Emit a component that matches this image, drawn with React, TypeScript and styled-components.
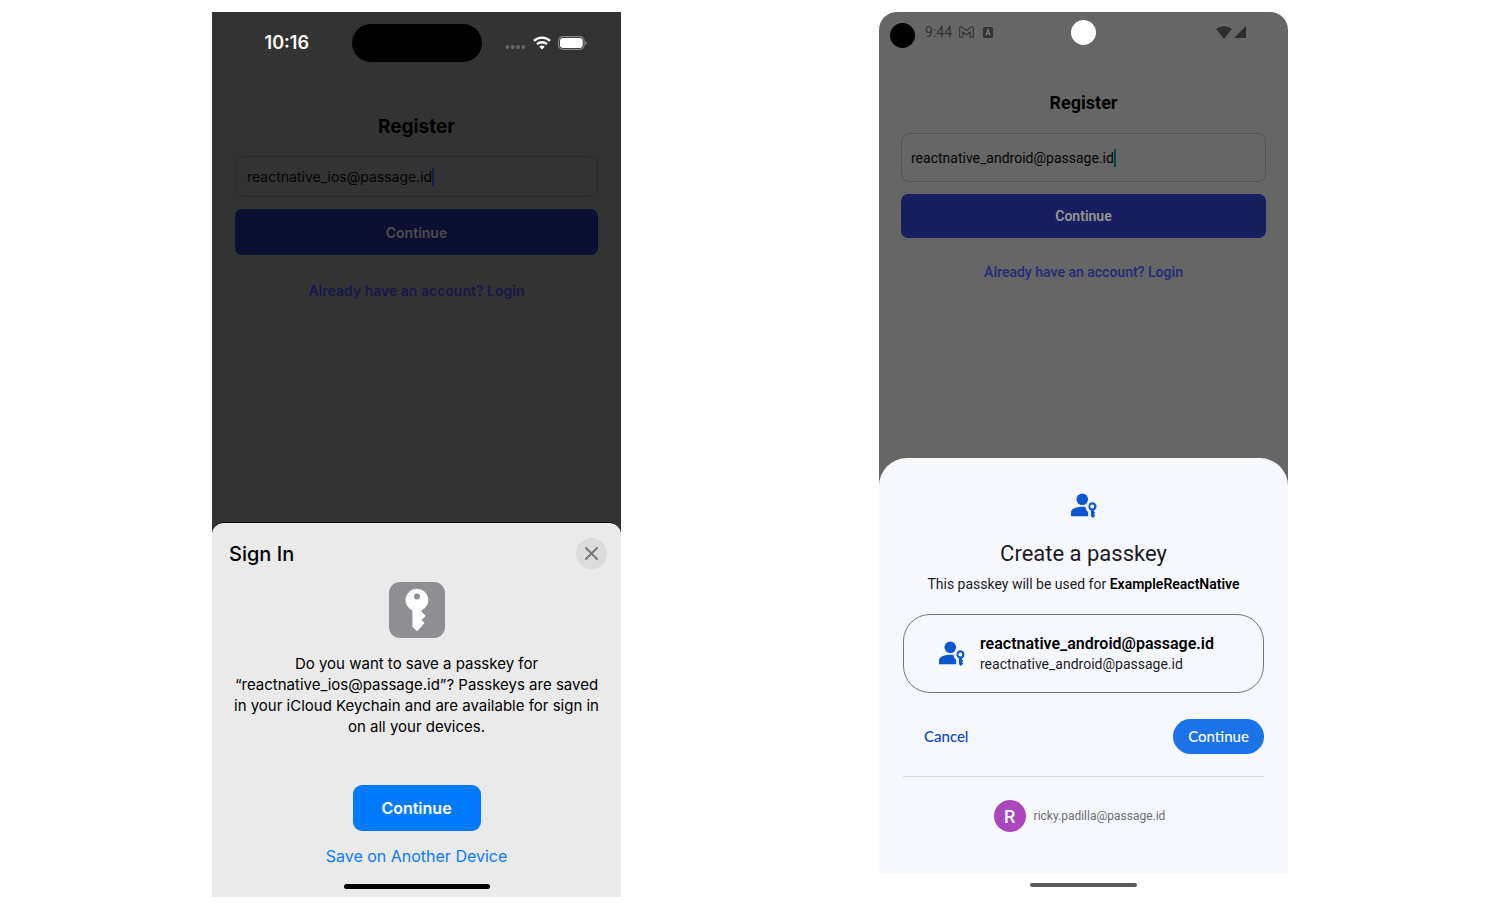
import React from "react";
import styled, { createGlobalStyle, css } from "styled-components";

const ios = `Inter, "Liberation Sans", sans-serif`;
const android = `Roboto, "Liberation Sans", sans-serif`;

const GlobalStyle = createGlobalStyle`
  *, *::before, *::after { box-sizing: border-box; }
  body { margin: 0; background: #fff; }
  h1, h2, p { margin: 0; }
  button, input { font: inherit; color: inherit; border: 0; padding: 0; background: none; }
  button { cursor: pointer; }
  a { text-decoration: none; }
  svg { display: block; flex: none; }
`;

const Page = styled.main`
  display: flex;
  flex-wrap: wrap;
  justify-content: space-between;
  gap: 24px;
  max-width: 1076px;
  margin: 0 auto;
  padding: 12px 0;
`;

const Phone = styled.section<{ $platform: "ios" | "android" }>`
  display: flex;
  flex-direction: column;
  flex: 0 1 409px;
  overflow: hidden;
  ${(p) =>
    p.$platform === "ios"
      ? css`
          font-family: ${ios};
          background: #333;
        `
      : css`
          font-family: ${android};
          border-radius: 18px 18px 0 0;
          background: #fff;
        `}
`;

const Backdrop = styled.div`
  display: flex;
  flex-direction: column;
  flex: 1;
  background: #666;
`;

/* iOS status bar */

const IosStatus = styled.header`
  display: grid;
  grid-template-columns: 1fr 130px 1fr;
  align-items: center;
  padding-top: 12px;
  color: #fff;
`;

const IosTime = styled.time`
  padding-left: 10px;
  text-align: center;
  font-size: 18px;
  line-height: 20px;
  font-weight: 600;
`;

const Island = styled.div`
  height: 38px;
  border-radius: 19px;
  background: #000;
`;

const IosIndicators = styled.div`
  display: flex;
  justify-content: flex-end;
  align-items: center;
  gap: 7px;
  padding-right: 34px;
`;

/* Android status bar */

const AndroidStatus = styled.header`
  display: grid;
  grid-template-columns: 1fr 25px 1fr;
  align-items: start;
  height: 43px;
  padding: 8px 11px 0;
  color: #333;
`;

const Camera = styled.div`
  width: 25px;
  height: 25px;
  border-radius: 50%;
  background: #fff;
`;

const RecordingDot = styled(Camera)`
  margin-top: 7px;
  background: #000;
`;

const StatusGroup = styled.div<{ $end?: boolean }>`
  display: flex;
  align-items: center;
  height: 24px;
  gap: ${(p) => (p.$end ? 2 : 7)}px;
  justify-content: ${(p) => (p.$end ? "flex-end" : "flex-start")};
  padding-right: ${(p) => (p.$end ? 31 : 0)}px;
`;

const AndroidTime = styled.time`
  padding-left: 3px;
  font-size: 14px;
  line-height: 16px;
`;

/* Register form */

const Form = styled.form<{ $platform: "ios" | "android" }>`
  display: flex;
  flex-direction: column;
  align-items: center;
  padding: ${(p) => (p.$platform === "ios" ? "53px 23px 221px" : "36px 22px 176px")};
`;

const FormTitle = styled.h1<{ $size: number }>`
  font-size: ${(p) => p.$size}px;
  line-height: 24px;
  font-weight: 700;
  color: #000;
`;

const Field = styled.label<{ $platform: "ios" | "android" }>`
  display: flex;
  align-items: center;
  width: 100%;
  border: 1px solid;
  border-radius: 8px;
  font-size: 14px;
  ${(p) =>
    p.$platform === "ios"
      ? css`
          height: 41px;
          margin-top: 17px;
          padding: 0 11px;
          border-color: #2b2b2d;
        `
      : css`
          height: 49px;
          margin-top: 18px;
          padding: 0 9px;
          border-color: #555557;
        `}
`;

const FieldInput = styled.input`
  field-sizing: content;
  min-width: 20px;
  outline: 0;
  color: #050505;
`;

const Caret = styled.span<{ $color: string }>`
  width: 2px;
  height: 18px;
  background: ${(p) => p.$color};
`;

const SubmitButton = styled.button<{ $platform: "ios" | "android" }>`
  width: 100%;
  margin-top: 12px;
  border-radius: 7px;
  font-size: 14px;
  font-weight: 600;
  ${(p) =>
    p.$platform === "ios"
      ? css`
          height: 46px;
          background: #0b0f30;
          color: #4c4c4c;
        `
      : css`
          height: 44px;
          background: #181f61;
          color: #969696;
        `}
`;

const LoginLink = styled.a<{ $platform: "ios" | "android" }>`
  font-size: 14px;
  font-weight: 600;
  line-height: 20px;
  ${(p) =>
    p.$platform === "ios"
      ? css`
          margin-top: 26px;
          color: #17194b;
        `
      : css`
          margin-top: 24px;
          color: #272e76;
        `}
`;

/* iOS sheet */

const IosSheet = styled.div`
  display: flex;
  flex-direction: column;
  align-items: center;
  flex: 1;
  padding: 15px 14px 7px;
  border-top: 1px solid #000;
  border-radius: 12px 12px 0 0;
  background: #eaeaea;
  color: #000;
`;

const SheetHeader = styled.div`
  display: flex;
  justify-content: space-between;
  align-items: center;
  width: 100%;
  padding-left: 3px;
`;

const SheetTitle = styled.h2`
  font-size: 20px;
  line-height: 24px;
  font-weight: 500;
`;

const CloseButton = styled.button`
  display: grid;
  place-items: center;
  width: 31px;
  height: 31px;
  border-radius: 50%;
  background: #dcdcdd;
`;

const KeyTile = styled.div`
  display: grid;
  place-items: center;
  width: 56px;
  height: 56px;
  margin-top: 13px;
  border-radius: 11px;
  background: #8e8e93;
`;

const Message = styled.p`
  max-width: 376px;
  margin-top: 15px;
  font-size: 15px;
  line-height: 21px;
  text-align: center;
`;

const PrimaryButton = styled.button`
  width: 128px;
  height: 46px;
  margin-top: 48px;
  border-radius: 9px;
  background: #007aff;
  color: #fff;
  font-size: 16px;
  font-weight: 600;
`;

const TextButton = styled.button`
  margin-top: 15px;
  color: #0a7aff;
  font-size: 16px;
  line-height: 20px;
`;

const HomeBar = styled.div<{ $width: number; $color: string; $top: number }>`
  width: ${(p) => p.$width}px;
  height: ${(p) => (p.$color === "#000" ? 5 : 4)}px;
  margin: ${(p) => p.$top}px auto 0;
  border-radius: 3px;
  background: ${(p) => p.$color};
`;

/* Android sheet */

const AndroidSheet = styled.div`
  display: flex;
  flex-direction: column;
  align-items: center;
  padding: 35px 24px 41px;
  border-radius: 28px 28px 0 0;
  background: #f8f9fe;
  color: #1b1b1f;
`;

const PasskeyTitle = styled.h2`
  margin-top: 21px;
  font-size: 22px;
  line-height: 28px;
  font-weight: 400;
`;

const PasskeyNote = styled.p`
  margin-top: 6px;
  font-size: 14px;
  line-height: 20px;

  strong {
    font-weight: 600;
    color: #000;
  }
`;

const Account = styled.div`
  display: flex;
  align-items: center;
  gap: 15px;
  width: 100%;
  height: 79px;
  margin-top: 20px;
  padding: 0 35px;
  border: 1px solid #76777a;
  border-radius: 27px;
`;

const AccountText = styled.div`
  display: flex;
  flex-direction: column;
  font-size: 14px;
  line-height: 20px;

  strong {
    font-size: 16px;
    font-weight: 600;
    color: #000;
  }
`;

const Actions = styled.div`
  display: flex;
  justify-content: space-between;
  align-items: center;
  width: 100%;
  margin-top: 26px;
  padding-bottom: 22px;
  border-bottom: 1px solid #dadce0;
  font-family: Lato, Roboto, sans-serif;
  font-size: 15px;
  font-weight: 500;
`;

const CancelButton = styled.button`
  height: 35px;
  padding: 0 21px 2px;
  color: #0b46d0;
`;

const ContinueButton = styled.button`
  width: 91px;
  height: 35px;
  padding-bottom: 2px;
  border-radius: 18px;
  background: #1a73e8;
  color: #fff;
`;

const Owner = styled.div`
  display: flex;
  align-items: center;
  gap: 8px;
  margin-top: 23px;
  padding-right: 8px;
  color: #6b6d72;
  font-size: 12px;
`;

const Avatar = styled.span`
  display: grid;
  place-items: center;
  width: 32px;
  height: 32px;
  border-radius: 50%;
  background: #ab47bc;
  color: #fff;
  font-size: 18px;
  font-weight: 500;
`;

const NavArea = styled.div`
  padding: 10px 0;
`;

const PasskeyIcon = () => (
  <svg width="26" height="26" viewBox="0 0 26 26" fill="#0b57d0" aria-hidden="true">
    <circle cx="11.3" cy="6.3" r="5.8" />
    <path d="M0 23.200v-3.500c0-2 1-3.400 2.800-4.200 2.500-1.200 5.200-1.800 8-1.800 1.500 0 2.500.1 3.700.3.200 2.100 1.200 3.900 2.700 5v4.200z" />
    <path
      fillRule="evenodd"
      d="M21.300 9.200a4.300 4.300 0 0 1 1.700 8.200v1.200l1.200 1.200-1.200 1.300 1.200 1.400-2.200 2.400-2-1.700v-5.800a4.300 4.300 0 0 1 1.300-8.200zm0 2.300a2 2 0 1 0 0 4 2 2 0 0 0 0-4z"
    />
  </svg>
);

function IosPhone() {
  return (
    <Phone $platform="ios">
      <IosStatus>
        <IosTime>10:16</IosTime>
        <Island />
        <IosIndicators>
          <svg width="21" height="18" viewBox="0 0 21 18" fill="#666">
            {[2.5, 7.8, 13.1, 18.4].map((x) => (
              <circle key={x} cx={x} cy="13" r="2" />
            ))}
          </svg>
          <svg width="18" height="14" viewBox="0 0 18 14" fill="none" stroke="#fff" strokeWidth="2.4">
            <path d="M1 4.900a11.500 11.500 0 0 1 16 0" />
            <path d="M4 8.200a7.200 7.200 0 0 1 10 0" />
            <path d="M6.300 10.700a3.900 3.900 0 0 1 5.400 0L9 13.500z" fill="#fff" stroke="none" />
          </svg>
          <svg width="29" height="14" viewBox="0 0 29 14">
            <rect x="0.6" y="0.6" width="25.5" height="12.8" rx="4.3" fill="none" stroke="#858585" strokeWidth="1.2" />
            <rect x="2" y="2" width="22.7" height="10" rx="3" fill="#fff" />
            <path d="M27.300 4.700c1.900.8 1.900 3.800 0 4.600z" fill="#858585" />
          </svg>
        </IosIndicators>
      </IosStatus>
      <Form $platform="ios" onSubmit={(e) => e.preventDefault()}>
        <FormTitle $size={19}>Register</FormTitle>
        <Field $platform="ios">
          <FieldInput type="text" aria-label="Email" defaultValue="reactnative_ios@passage.id" />
          <Caret $color="#0c1d55" />
        </Field>
        <SubmitButton $platform="ios">Continue</SubmitButton>
        <LoginLink $platform="ios" href="#login">
          Already have an account? Login
        </LoginLink>
      </Form>
      <IosSheet>
        <SheetHeader>
          <SheetTitle>Sign In</SheetTitle>
          <CloseButton aria-label="Close">
            <svg width="13" height="13" viewBox="0 0 13 13" stroke="#77777b" strokeWidth="2" strokeLinecap="round">
              <path d="M1 1l11 11M12 1L1 12" />
            </svg>
          </CloseButton>
        </SheetHeader>
        <KeyTile>
          <svg width="24" height="44" viewBox="0 0 24 44" fill="#fff">
            <path
              fillRule="evenodd"
              d="M12 .8a11.300 11.300 0 0 1 4.400 21.700v1l3.700 3.700c.4.400.4.800 0 1.200L16.500 32l2.400 2.500c.4.400.4.900 0 1.300l-6.200 7c-.4.400-.9.400-1.300 0l-3.500-3.600c-.4-.4-.5-.8-.5-1.300V22.500A11.300 11.300 0 0 1 12 .8zm0 4.700a3 3 0 1 0 0 6 3 3 0 0 0 0-6z"
            />
          </svg>
        </KeyTile>
        <Message>
          Do you want to save a passkey for
          <br />
          “reactnative_ios@passage.id”? Passkeys are saved
          <br />
          in your iCloud Keychain and are available for sign in
          <br />
          on all your devices.
        </Message>
        <PrimaryButton>Continue</PrimaryButton>
        <TextButton>Save on Another Device</TextButton>
        <HomeBar $width={146} $color="#000" $top={18} />
      </IosSheet>
    </Phone>
  );
}

function AndroidPhone() {
  return (
    <Phone $platform="android">
      <Backdrop>
        <AndroidStatus>
          <StatusGroup>
            <RecordingDot />
            <AndroidTime>9:44</AndroidTime>
            <svg width="15" height="12" viewBox="0 0 15 12" fill="none" stroke="#333" strokeWidth="1.1">
              <path d="M.7 11.200V2.200C.7.800 2.200.3 3.200 1.100L7.500 4.500l4.300-3.400c1-.8 2.500-.3 2.500 1.100v9h-3.200V6L7.500 8.800 3.900 6v5.200z" />
            </svg>
            <svg width="16" height="11" viewBox="0 0 16 11">
              <rect x="2" width="10" height="11" rx="1.500" fill="#333" />
              <path d="M4.700 8.500L7 2.500l2.300 6M5.500 6.700h3" fill="none" stroke="#777" strokeWidth="1.2" />
            </svg>
          </StatusGroup>
          <Camera />
          <StatusGroup $end>
            <svg width="16" height="13" viewBox="0 0 16 13" fill="#2e2e2e">
              <path d="M8 12.800L.3 3.200C4.500-.6 11.500-.6 15.700 3.200z" />
            </svg>
            <svg width="12" height="12" viewBox="0 0 12 12" fill="#2e2e2e">
              <path d="M12 0v12H0z" />
            </svg>
          </StatusGroup>
        </AndroidStatus>
        <Form $platform="android" onSubmit={(e) => e.preventDefault()}>
          <FormTitle $size={18}>Register</FormTitle>
          <Field $platform="android">
            <FieldInput type="text" aria-label="Email" defaultValue="reactnative_android@passage.id" />
            <Caret $color="#00483f" />
          </Field>
          <SubmitButton $platform="android">Continue</SubmitButton>
          <LoginLink $platform="android" href="#login">
            Already have an account? Login
          </LoginLink>
        </Form>
        <AndroidSheet>
          <PasskeyIcon />
          <PasskeyTitle>Create a passkey</PasskeyTitle>
          <PasskeyNote>
            This passkey will be used for <strong>ExampleReactNative</strong>
          </PasskeyNote>
          <Account>
            <PasskeyIcon />
            <AccountText>
              <strong>reactnative_android@passage.id</strong>
              <span>reactnative_android@passage.id</span>
            </AccountText>
          </Account>
          <Actions>
            <CancelButton>Cancel</CancelButton>
            <ContinueButton>Continue</ContinueButton>
          </Actions>
          <Owner>
            <Avatar>R</Avatar>
            <span>ricky.padilla@passage.id</span>
          </Owner>
        </AndroidSheet>
      </Backdrop>
      <NavArea>
        <HomeBar $width={107} $color="#5a5a5a" $top={0} />
      </NavArea>
    </Phone>
  );
}

export default function App() {
  return (
    <>
      <GlobalStyle />
      <Page>
        <IosPhone />
        <AndroidPhone />
      </Page>
    </>
  );
}
